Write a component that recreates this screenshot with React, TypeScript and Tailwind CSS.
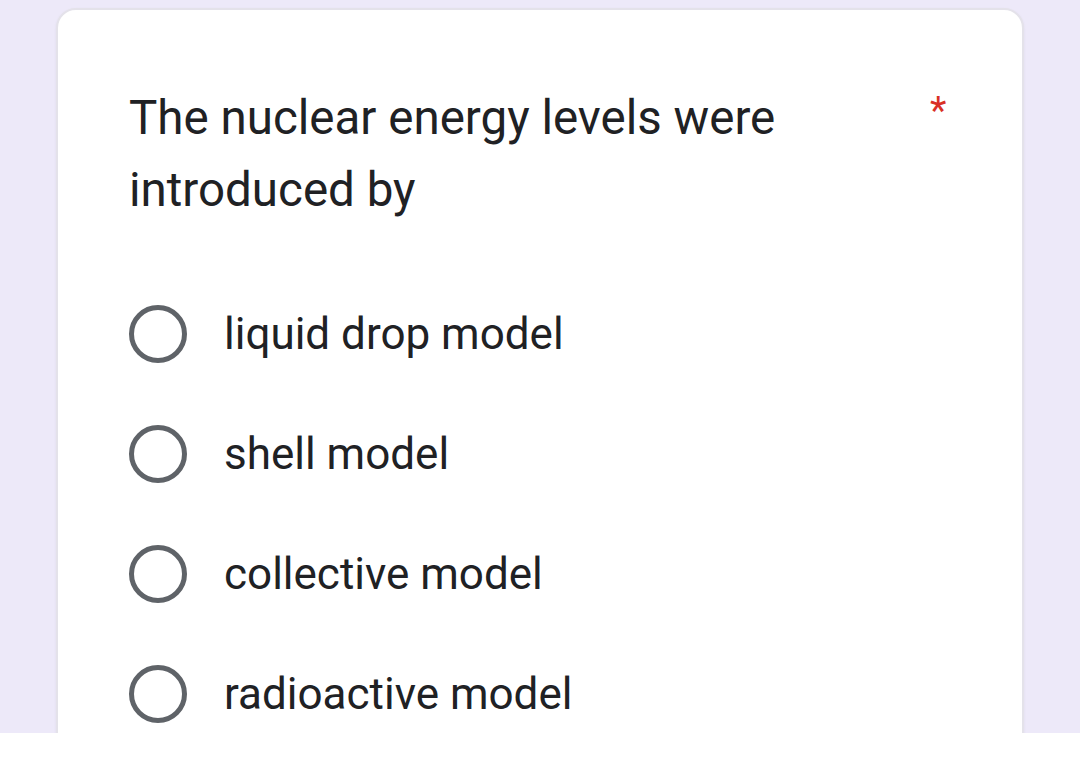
export default function App() {
  const options = ['liquid drop model', 'shell model', 'collective model', 'radioactive model']

  return (
    <div className="flex h-[759px] w-[1080px] flex-col bg-white font-['Roboto',sans-serif] text-[#202124]">
      <div className="h-[733px] overflow-hidden bg-[#ede9f9] pl-[56px] pt-[8px]">
        <div className="h-[760px] w-[968px] rounded-[20px] border-2 border-[#e4e2ea] bg-white pl-[71px] pt-[72px] pr-[70px] shadow-[0_1px_3px_rgba(0,0,0,0.06)]">
          {/* Question title */}
          <div className="flex items-start">
            <div className="w-[760px] text-[47.5px] leading-[72px]">
              The nuclear energy levels were introduced by
            </div>
            <span className="ml-[41px] mt-[4px] text-[38px] leading-[50px] text-[#d93025]">*</span>
          </div>

          {/* Options */}
          <div className="mt-[48px] flex flex-col">
            {options.map((o) => (
              <label key={o} className="flex h-[120px] items-center">
                <span className="h-[58px] w-[58px] shrink-0 rounded-full border-[5px] border-[#5f6368]" />
                <span className="ml-[37px] text-[44px] leading-[48px]">{o}</span>
              </label>
            ))}
          </div>
        </div>
      </div>
    </div>
  )
}
